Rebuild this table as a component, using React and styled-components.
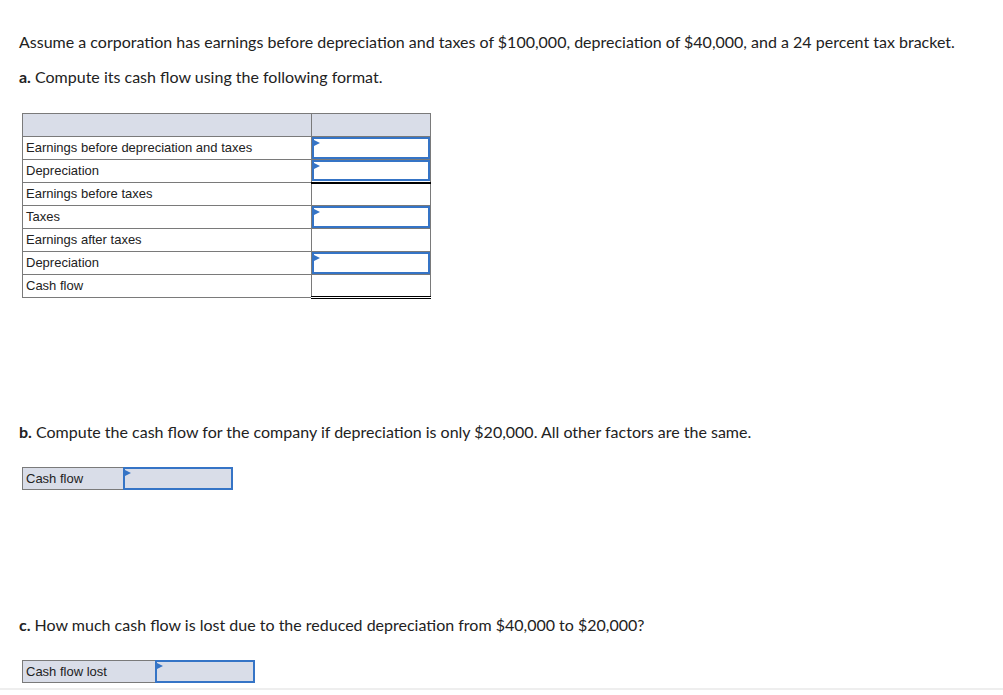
import React from 'react';
import styled, { createGlobalStyle } from 'styled-components';

const Global = createGlobalStyle`
  body {
    margin: 0;
    background: #fff;
    font-family: Lato, "Open Sans", sans-serif;
    color: #222;
  }
`;

const Page = styled.div`
  padding: 32px 19px 0;
  height: 656px;
  border-bottom: 2px solid #eeeeee;
`;

const Para = styled.p`
  margin: ${p => p.$top || 0}px 0 0;
  font-size: 16px;
  line-height: 20px;
  color: #222;
`;

const Table = styled.table`
  margin: 26px 0 0 3px;
  border-collapse: collapse;
  font-family: "Liberation Sans", Arial, sans-serif;
  font-size: 13px;
  color: #222;
`;

const Row = styled.tr`
  height: 23px;
`;

const HeadCell = styled.td`
  background: #d9dde8;
  border: 1px solid #7a7a7a;
  padding: 0;
  width: ${p => p.$w}px;
`;

const Label = styled.td`
  border: 1px solid #7a7a7a;
  padding: 0 0 0 3px;
  white-space: nowrap;
  line-height: 14px;
`;

const Value = styled.td`
  border: 1px solid #7a7a7a;
  padding: 0;
  line-height: 0;
  vertical-align: top;
  border-bottom: ${p => (p.$line === 'single' ? '2px solid #000' : p.$line === 'double' ? '3px double #000' : '1px solid #7a7a7a')};
`;

const Entry = styled.div`
  position: relative;
  box-sizing: border-box;
  height: ${p => (p.$line ? 21 : 22)}px;
  border: 2px solid #3574c6;
  background: #fff;
`;

const Marker = styled.span`
  position: absolute;
  top: 1px;
  left: 0;
  width: 0;
  height: 0;
  border-top: 3px solid transparent;
  border-bottom: 3px solid transparent;
  border-left: 6px solid #3574c6;
`;

const Inline = styled.div`
  display: flex;
  margin: 25px 0 0 3px;
  height: 23px;
  font-family: "Liberation Sans", Arial, sans-serif;
  font-size: 13px;
  color: #222;
`;

const InlineLabel = styled.div`
  box-sizing: border-box;
  width: ${p => p.$w}px;
  display: flex;
  align-items: center;
  padding-left: 3px;
  background: #d9dde8;
  border: 1px solid #7a7a7a;
  border-right: none;
`;

const InlineEntry = styled.div`
  position: relative;
  box-sizing: border-box;
  width: ${p => p.$w}px;
  border: 2px solid #3574c6;
  background: #d9dde8;
`;

const rows = [
  { label: 'Earnings before depreciation and taxes', input: true },
  { label: 'Depreciation', input: true, line: 'single' },
  { label: 'Earnings before taxes' },
  { label: 'Taxes', input: true },
  { label: 'Earnings after taxes' },
  { label: 'Depreciation', input: true },
  { label: 'Cash flow', line: 'double' },
];

export default function App() {
  return (
    <>
      <Global />
      <Page>
        <Para>
          Assume a corporation has earnings before depreciation and taxes of $100,000, depreciation of $40,000, and a 24 percent tax bracket.
        </Para>
        <Para $top={15}>
          <b>a.</b> Compute its cash flow using the following format.
        </Para>
        <Table>
          <tbody>
            <Row>
              <HeadCell $w={288} />
              <HeadCell $w={118} />
            </Row>
            {rows.map((r, i) => (
              <Row key={i}>
                <Label>{r.label}</Label>
                <Value $line={r.line}>
                  {r.input && (
                    <Entry $line={r.line}>
                      <Marker />
                    </Entry>
                  )}
                </Value>
              </Row>
            ))}
          </tbody>
        </Table>
        <Para $top={123}>
          <b>b.</b> Compute the cash flow for the company if depreciation is only $20,000. All other factors are the same.
        </Para>
        <Inline>
          <InlineLabel $w={101}>Cash flow</InlineLabel>
          <InlineEntry $w={110}>
            <Marker />
          </InlineEntry>
        </Inline>
        <Para $top={125}>
          <b>c.</b> How much cash flow is lost due to the reduced depreciation from $40,000 to $20,000?
        </Para>
        <Inline>
          <InlineLabel $w={133}>Cash flow lost</InlineLabel>
          <InlineEntry $w={100}>
            <Marker />
          </InlineEntry>
        </Inline>
      </Page>
    </>
  );
}
